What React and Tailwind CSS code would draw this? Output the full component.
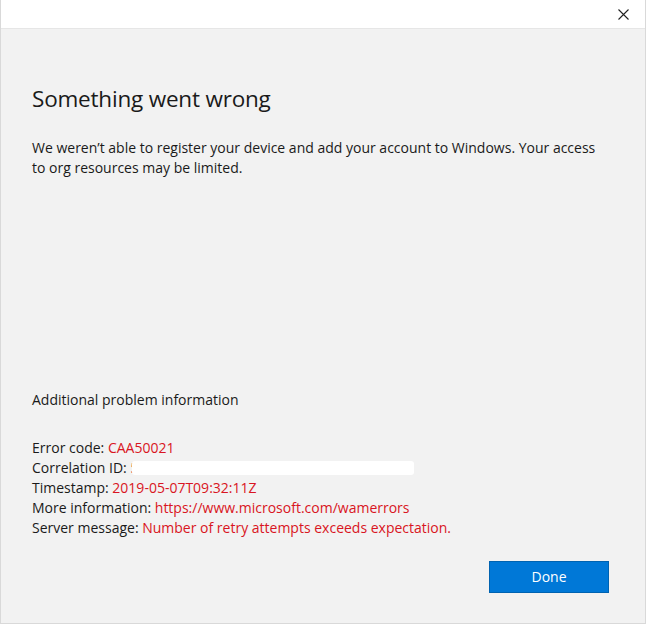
import React from "react";

export default function App() {
  const font = { fontFamily: '"Segoe UI", "Open Sans", "Noto Sans", sans-serif' };

  return (
    <div
      className="w-[646px] h-[624px] bg-[#f2f2f2] border-x border-b border-[#d9d9d9] flex flex-col text-[#000000]"
      style={font}
    >
      {/* title bar */}
      <div className="h-[29px] bg-white flex justify-end items-start shrink-0 border-b border-[#e6e6e6]">
        <button className="w-[44px] h-[28px] flex items-center justify-center text-[#111]">
          <svg width="11" height="11" viewBox="0 0 11 11">
            <path d="M0.5 0.5 L10.5 10.5 M10.5 0.5 L0.5 10.5" stroke="#222" strokeWidth="1.1" fill="none" />
          </svg>
        </button>
      </div>

      <div className="flex-1 flex flex-col px-[31px]">
        <h1 className="mt-[54px] text-[22.5px] leading-[32px] font-normal text-[#1a1a1a] tracking-[-0.2px]">
          Something went wrong
        </h1>
        <p className="mt-[23px] text-[14px] leading-[20px] text-[#1a1a1a] w-[580px]">
          We weren’t able to register your device and add your account to Windows. Your access
          to org resources may be limited.
        </p>

        <div className="mt-[212px] text-[14px] leading-[20px] text-[#1a1a1a]">
          Additional problem information
        </div>

        <div className="mt-[28px] text-[14px] leading-[20px] text-[#1a1a1a]">
          <div>
            Error code: <span className="text-[#d91522]">CAA50021</span>
          </div>
          <div className="flex items-center">
            <span>Correlation ID:&nbsp;</span>
            <span className="text-[#d91522]">5</span>
            <span className="w-[282px] h-[14px] bg-white rounded-[3px] -ml-[6px]"></span>
          </div>
          <div>
            Timestamp: <span className="text-[#d91522]">2019-05-07T09:32:11Z</span>
          </div>
          <div>
            More information: <span className="text-[#d91522]">https://www.microsoft.com/wamerrors</span>
          </div>
          <div>
            Server message:{" "}
            <span className="text-[#d91522]">Number of retry attempts exceeds expectation.</span>
          </div>
        </div>

        <div className="flex justify-end mt-[23px] pr-[5px]">
          <button className="w-[120px] h-[32px] bg-[#0078d7] text-white text-[14px] leading-[20px] border border-[#0063b1]">
            Done
          </button>
        </div>
      </div>
    </div>
  );
}
